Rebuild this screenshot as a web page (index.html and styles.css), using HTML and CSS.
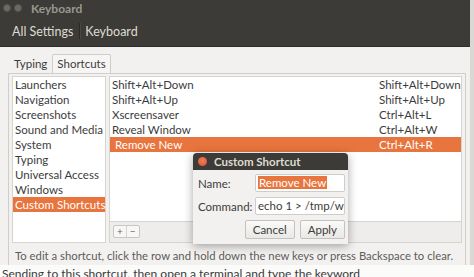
FILE: index.html
```html
<!DOCTYPE html>
<html>
<head>
<meta charset="utf-8">
<link rel="stylesheet" href="styles.css">
</head>
<body>
<div class="window">
  <div class="titlebar">
    <span class="wbtn"></span><span class="wbtn"></span>
    <span class="title">Keyboard</span>
  </div>
  <div class="toolbar">
    <span class="crumb">All Settings</span>
    <span class="sep"></span>
    <span class="crumb">Keyboard</span>
  </div>
  <div class="content">
    <div class="tabs">
      <span class="tab">Typing</span>
      <span class="tab active">Shortcuts</span>
    </div>
    <div class="panel">
      <div class="lists">
        <div class="cats">
          <div class="row">Launchers</div>
          <div class="row">Navigation</div>
          <div class="row">Screenshots</div>
          <div class="row">Sound and Media</div>
          <div class="row">System</div>
          <div class="row">Typing</div>
          <div class="row">Universal Access</div>
          <div class="row">Windows</div>
          <div class="row sel">Custom Shortcuts</div>
        </div>
        <div class="right">
          <div class="shortcuts">
            <div class="row"><span>Shift+Alt+Down</span><span class="key">Shift+Alt+Down</span></div>
            <div class="row"><span>Shift+Alt+Up</span><span class="key">Shift+Alt+Up</span></div>
            <div class="row"><span>Xscreensaver</span><span class="key">Ctrl+Alt+L</span></div>
            <div class="row"><span>Reveal Window</span><span class="key">Ctrl+Alt+W</span></div>
            <div class="row sel"><span class="indent">Remove New</span><span class="key">Ctrl+Alt+R</span></div>
          </div>
          <div class="listbar">
            <span class="pm"><span>+</span><span>−</span></span>
          </div>
        </div>
      </div>
      <div class="hint">To edit a shortcut, click the row and hold down the new keys or press Backspace to clear.</div>
    </div>
  </div>
  <div class="dialog">
    <div class="dtitle"><span class="close"></span><span>Custom Shortcut</span></div>
    <div class="dbody">
      <div class="field"><span class="lbl">Name:</span><span class="entry"><span class="hl">Remove New</span></span></div>
      <div class="field"><span class="lbl">Command:</span><span class="entry">echo 1 &gt; /tmp/w</span></div>
      <div class="buttons"><span class="btn">Cancel</span><span class="btn">Apply</span></div>
    </div>
  </div>
</div>
<div class="below">Sending to this shortcut, then open a terminal and type the keyword</div>
</body>
</html>
```
FILE: styles.css
```css
html, body { margin: 0; padding: 0; }
body {
  width: 474px; height: 277px; overflow: hidden;
  background: #fbfbfa;
  font-family: Lato, "Open Sans", sans-serif;
  font-size: 11.5px;
  color: #3c3c3c;
}
.window {
  position: relative;
  height: 265px;
  background: #f2f1f0;
  border-right: 4px solid #d9d8d5;
  box-sizing: border-box;
  display: flex; flex-direction: column;
}
.titlebar {
  height: 16px; background: #3c3b37;
  display: flex; align-items: center; padding-left: 3px;
}
.wbtn {
  width: 8px; height: 8px; border-radius: 50%;
  background: #6b6a65; border: 1px solid #55544f;
  margin-right: 3px; box-sizing: border-box;
}
.title { margin-left: 6px; color: #9a978f; font-weight: bold; font-size: 12px; }
.toolbar {
  height: 30px; background: #3c3b37;
  border-bottom: 1px solid #2f2e2b;
  display: flex; align-items: center; padding-left: 12px;
  color: #dfdbd2; font-size: 12.5px;
}
.sep { width: 1px; height: 16px; background: #2a2926; box-shadow: 1px 0 0 #4a4944; margin: 0 5px 0 6px; }
.content { flex: 1; padding: 8px 4px 0 8px; display: flex; flex-direction: column; }
.tabs { display: flex; align-items: flex-end; height: 18px; padding-left: 5px; }
.tab { padding: 0 3px 0 1px; line-height: 18px; }
.tab.active {
  margin-left: 2px; padding: 0 4px;
  background: #f6f5f4;
  border: 1px solid #cfcdc9; border-bottom: none;
  border-radius: 2px 2px 0 0;
}
.panel {
  flex: 1; border: 1px solid #d0cecb; border-bottom: none;
  padding: 2px 3px 0 3px;
  display: flex; flex-direction: column;
}
.lists { display: flex; gap: 3px; height: 167px; }
.cats {
  width: 94px; background: #fff; border: 1px solid #d6d4d1;
  box-sizing: border-box;
}
.row { height: 15px; line-height: 15px; padding-left: 2px; white-space: nowrap; }
.row.sel { background: #e8743e; color: #fff; }
.right { flex: 1; display: flex; flex-direction: column; }
.shortcuts {
  height: 146px; background: #fff; border: 1px solid #d6d4d1; box-sizing: border-box;
}
.shortcuts .row { display: flex; justify-content: space-between; }
.shortcuts .key { width: 82px; }
.indent { padding-left: 3px; }
.listbar {
  flex: 1; border: 1px solid #d6d4d1; border-top: none;
  background: #eeedeb; padding: 2px 3px;
}
.pm {
  display: inline-flex; border: 1px solid #c8c6c2; border-radius: 2px;
  background: #f7f7f6; font-size: 10px; line-height: 11px; color: #666;
}
.pm span { padding: 0 3px; }
.pm span + span { border-left: 1px solid #d6d4d1; }
.hint { margin-top: 6px; padding-left: 3px; color: #5d5c58; white-space: nowrap; font-size: 11.3px; }
.dialog {
  position: absolute; left: 193px; top: 153px; width: 155px; height: 91px;
  background: #f2f1f0; border-radius: 4px 4px 0 0;
  box-shadow: 0 2px 10px rgba(0,0,0,0.35);
  display: flex; flex-direction: column;
}
.dtitle {
  height: 17px; background: #3c3b37; border-radius: 4px 4px 0 0;
  display: flex; align-items: center; padding-left: 5px;
  color: #dfdbd2; font-weight: bold;
}
.close {
  width: 9px; height: 9px; border-radius: 50%;
  background: radial-gradient(circle at 50% 40%, #f0805a, #d4502e);
  margin-right: 7px;
}
.dbody { padding: 4px 3px 0 5px; display: flex; flex-direction: column; gap: 5px; }
.field { display: flex; align-items: center; justify-content: space-between; }
.entry {
  width: 90px; height: 18px; box-sizing: border-box;
  background: #fff; border: 1px solid #cfcdc9; border-radius: 2px;
  padding: 0 2px; line-height: 16px; white-space: nowrap; overflow: hidden;
}
.hl { background: #e8743e; color: #fff; padding: 0 1px; }
.buttons { display: flex; justify-content: flex-end; gap: 5px; }
.btn {
  height: 19px; line-height: 17px; box-sizing: border-box;
  border: 1px solid #c4c2be; border-radius: 2px;
  background: linear-gradient(#fafaf9, #e9e8e6);
  padding: 0 7px;
}
.below {
  height: 12px; color: #3a3a3a; font-size: 12px;
  padding-left: 2px; line-height: 18px; overflow: hidden; white-space: nowrap;
}
```
